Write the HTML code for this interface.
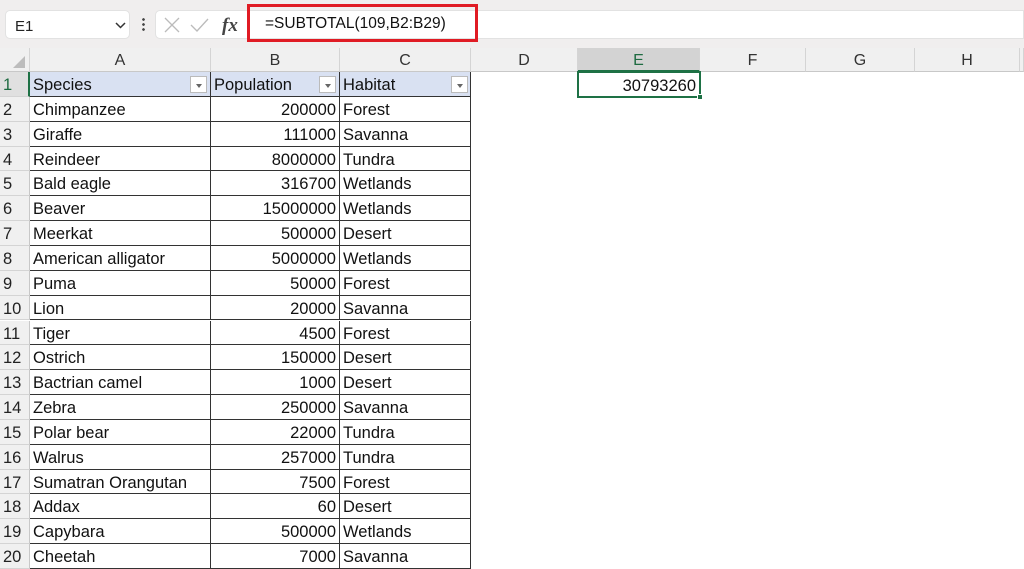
<!DOCTYPE html>
<html><head><meta charset="utf-8"><style>
*{margin:0;padding:0;box-sizing:border-box}
body{width:1024px;height:568px;overflow:hidden;background:#fff;font-family:"Liberation Sans",sans-serif;position:relative}
.top{position:absolute;left:0;top:0;width:1024px;height:48px;background:#f0eeee}
.nb{position:absolute;left:5px;top:10px;width:125px;height:29px;background:#fff;border-radius:5px;border:1px solid #e2e2e2;font-size:15px;padding:7px 0 0 9px;color:#222}
.fb{position:absolute;left:155px;top:10px;width:869px;height:29px;background:#fff;border-radius:5px 0 0 5px;border:1px solid #e2e2e2}
.red{position:absolute;left:247px;top:4px;width:231px;height:38px;border:3px solid #e01b24}
.ft{position:absolute;left:265px;top:15px;font-size:15.5px;color:#111}
.ch{position:absolute;top:48px;height:24px;background:#f0f0f0;border-right:1px solid #d4d4d4;border-bottom:1px solid #c8c8c8;text-align:center;font-size:16px;line-height:26px;color:#333}
.rh{position:absolute;left:0;width:30px;background:#f0f0f0;border-bottom:1px solid #d4d4d4;border-right:1px solid #c8c8c8;font-size:16.5px;color:#222;padding-left:3px;padding-top:2px}
.c{position:absolute;font-size:16.5px;color:#111;border-right:1px solid #333;border-bottom:1px solid #333;padding:2px 3px 0;white-space:nowrap;overflow:hidden}
.r{text-align:right}
.dd{position:absolute;width:17px;height:17px;border:1px solid #bbb;background:#fff;top:4px}
.dd:after{content:"";position:absolute;left:5px;top:7px;border-left:3px solid transparent;border-right:3px solid transparent;border-top:4px solid #666}
</style></head><body>
<div class="top"></div>
<div class="nb">E1<svg style="position:absolute;left:109px;top:11px" width="11" height="7"><path d="M1 1L5.5 5.5L10 1" stroke="#333" stroke-width="1.5" fill="none"/></svg></div>
<div style="position:absolute;left:142px;top:17px;width:3px;height:15px;background:radial-gradient(circle,#444 1.2px,transparent 1.5px) 0 0/3px 5px"></div>
<div class="fb"></div>
<svg style="position:absolute;left:160px;top:15px" width="90" height="22"><path d="M5 3L19 17M19 3L5 17" stroke="#bbb" stroke-width="1.3"/><path d="M31 10L37 16L48 4" stroke="#bbb" stroke-width="1.3" fill="none"/><text x="62" y="16" font-family="Liberation Serif" font-style="italic" font-weight="bold" font-size="19" fill="#444">fx</text></svg>
<div class="red"></div>
<div class="ft">=SUBTOTAL(109,B2:B29)</div>
<div class="ch" style="left:0;width:30px"><svg width="30" height="24" style="position:absolute;left:0;top:0"><path d="M25 8L25 20L13 20Z" fill="#bcbcbc"/></svg></div>
<div class="ch" style="left:30px;width:181px">A</div>
<div class="ch" style="left:211px;width:129px">B</div>
<div class="ch" style="left:340px;width:131px">C</div>
<div class="ch" style="left:471px;width:107px">D</div>
<div class="ch" style="left:578px;width:122px;background:#d3d3d3;color:#1e6b41;border-bottom:2px solid #1e7145">E</div>
<div class="ch" style="left:700px;width:106px">F</div>
<div class="ch" style="left:806px;width:109px">G</div>
<div class="ch" style="left:915px;width:105px">H</div>
<div class="ch" style="left:1020px;width:4px"></div>
<div id="g"></div>
<script>
var d=[["Species","Population","Habitat"],["Chimpanzee","200000","Forest"],["Giraffe","111000","Savanna"],["Reindeer","8000000","Tundra"],["Bald eagle","316700","Wetlands"],["Beaver","15000000","Wetlands"],["Meerkat","500000","Desert"],["American alligator","5000000","Wetlands"],["Puma","50000","Forest"],["Lion","20000","Savanna"],["Tiger","4500","Forest"],["Ostrich","150000","Desert"],["Bactrian camel","1000","Desert"],["Zebra","250000","Savanna"],["Polar bear","22000","Tundra"],["Walrus","257000","Tundra"],["Sumatran Orangutan","7500","Forest"],["Addax","60","Desert"],["Capybara","500000","Wetlands"],["Cheetah","7000","Savanna"]];
var h="",H=24.85;
for(var i=0;i<20;i++){var t=72+i*H,s="top:"+t+"px;height:"+H+"px;line-height:"+(H-2)+"px;";
h+='<div class="rh" style="'+s+(i==0?'color:#1e6b41;background:#e0e0e0;border-right:2px solid #1e7145;':'')+'">'+(i+1)+'</div>';
var bg=i==0?"background:#d9e1f2;":"";
h+='<div class="c" style="'+s+bg+'left:30px;width:181px">'+d[i][0]+'</div>';
h+='<div class="c'+(i?' r':'')+'" style="'+s+bg+'left:211px;width:129px">'+d[i][1]+'</div>';
h+='<div class="c" style="'+s+bg+'left:340px;width:131px">'+d[i][2]+'</div>';}
h+='<div class="dd" style="left:190px;top:76px"></div><div class="dd" style="left:319px;top:76px"></div><div class="dd" style="left:451px;top:76px"></div>';
h+='<div style="position:absolute;left:577px;top:71px;width:124px;height:27px;border:2px solid #1e7145;font-size:16.5px;text-align:right;padding-right:3px;padding-top:2px;line-height:23px;color:#111">30793260</div><div style="position:absolute;left:697px;top:94px;width:6px;height:6px;background:#1e7145;border:1px solid #fff"></div>';
document.getElementById("g").innerHTML=h;
</script>
</body></html>
